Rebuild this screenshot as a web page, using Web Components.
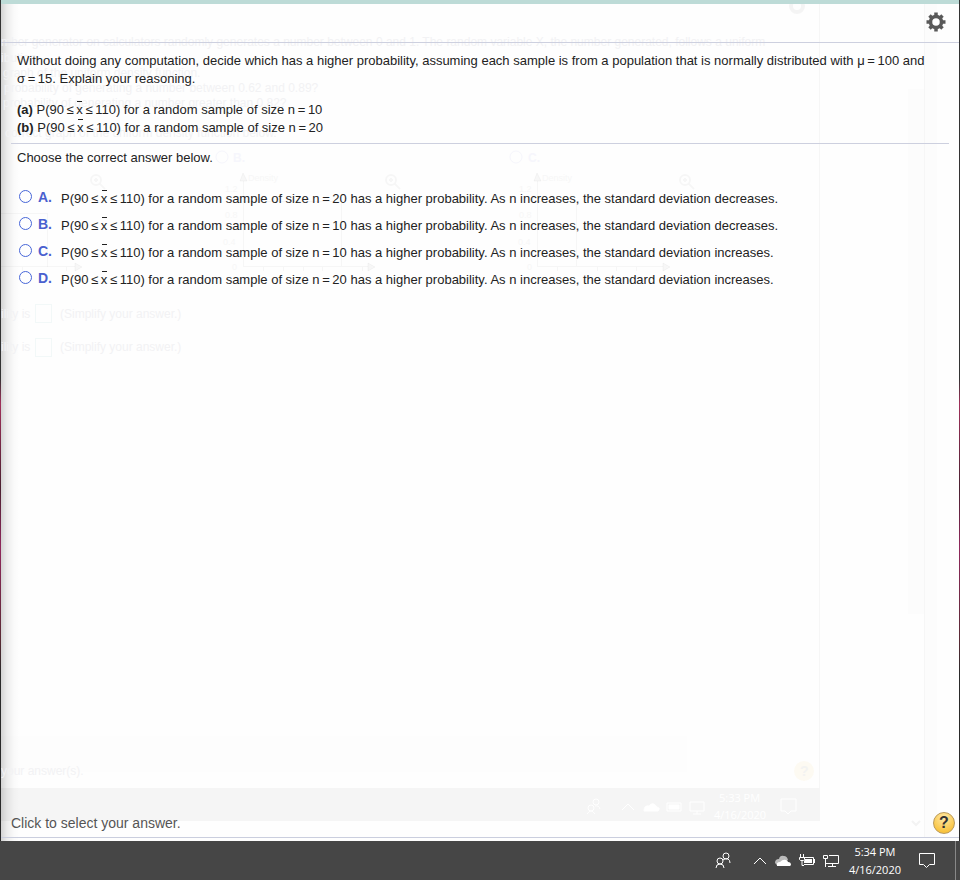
<!DOCTYPE html>
<html lang="en">
<head>
<meta charset="utf-8">
<title>Question</title>
<style>
  html, body { height: 100%; margin: 0; }
  body {
    font-family: "Liberation Sans", Arial, sans-serif;
    font-size: 13px;
    color: #222;
  }
</style>
</head>
<body>
<quiz-app></quiz-app>

<script>
const define = (name, template) =>
  customElements.define(
    name,
    class extends HTMLElement {
      constructor() {
        super();
        this.attachShadow({ mode: "open" });
        this.shadowRoot.innerHTML = template;
      }
    }
  );

// x with a bar over it
define("x-bar", `
  <span>x</span>
  <style>
  :host { display: inline-block; line-height: 12px; }
  span {
    display: block;
    padding-top: 3px;
    background: linear-gradient(#222, #222) top center / 5px 1px no-repeat;
  }
  </style>
`);

define("sample-range", `P(90&thinsp;≤&thinsp;<x-bar></x-bar>&thinsp;≤&thinsp;110)
  <style>
  :host { display: inline; white-space: nowrap; }
  </style>
`);

// The previous window, still fading out behind the question
define("fading-window", `
  <svg width="960" height="841" viewBox="1 0 960 841" aria-hidden="true">
    <rect x="908" y="89" width="17" height="525" fill="#fcfcfc"/>
    <rect x="925" y="4" width="12" height="833" fill="#fcfcfc"/>
    <path d="M819.5 4V788M924.5 4V837" stroke="#f6f6f6"/>
    <rect y="736" width="687" height="36" fill="#000" fill-opacity=".004"/>
    <rect y="788" width="820" height="33" fill="#000" fill-opacity=".035"/>
    <g fill="#f2f2f4" font-size="12">
      <text x="1" y="46">mber generator on calculators randomly generates a number between 0 and 1. The random variable X, the number generated, follows a uniform</text>
      <text x="1" y="62">ibution.</text>
      <text x="3" y="77">graph of the uniform density function.</text>
      <text x="4" y="92">probability of generating a number between 0.62 and 0.89?</text>
      <text x="3" y="107">probability of generating a number greater than 0.82?</text>
      <text x="5" y="137">correct graph of the uniform density function below.</text>
      <text x="1" y="318">ility is</text>
      <text x="60" y="318">(Simplify your answer.)</text>
      <text x="1" y="351">ility is</text>
      <text x="60" y="351">(Simplify your answer.)</text>
      <text x="1" y="775">your answer(s).</text>
    </g>
    <g fill="none" stroke="#f2f8f8">
      <rect x="35.5" y="304.5" width="16" height="18"/>
      <rect x="35.5" y="338.5" width="16" height="18"/>
    </g>
    <g fill="none" stroke="#f6f6fc">
      <circle cx="222" cy="157" r="6"/><circle cx="516" cy="157" r="6"/>
    </g>
    <g fill="#f6f6fc" font-size="12" font-weight="bold">
      <text x="233" y="162">B.</text><text x="528" y="162">C.</text>
    </g>
    <g fill="none" stroke="#000" stroke-opacity=".03">
      <path d="M0 213.5H47.5V267M0 266.5H80M243.5 176V266.5H372M243 201.5H341.5V266M537.5 176V266.5H668M537 201.5H576.5V266"/>
      <path d="M22.5 267v4M66.5 267v4M263.5 267v4M283.5 267v4M303.5 267v4M322.5 267v4M362.5 267v4M557.5 267v4M597.5 267v4M616.5 267v4M636.5 267v4"/>
      <path d="M75 263l7 4-7 4zM368 263l7 4-7 4zM663 263l7 4-7 4zM240 181l3-8 4 8zM534 181l3-8 4 8z" fill="#f7f7f7"/>
      <g stroke-width="2">
        <circle cx="96" cy="180" r="5"/><path d="M100 184l5 5M94 180h4M96 178v4"/>
        <circle cx="391" cy="180" r="5"/><path d="M395 184l5 5M389 180h4M391 178v4"/>
        <circle cx="685" cy="180" r="5"/><path d="M689 184l5 5M683 180h4M685 178v4"/>
      </g>
    </g>
    <g fill="#f7f7f7" font-size="9">
      <text x="248" y="181">Density</text><text x="542" y="181">Density</text>
      <text x="225" y="192">1.2</text><text x="225" y="218">0.8</text><text x="223" y="245">0.4</text><text x="232" y="270">0</text>
      <text x="519" y="192">1.2</text><text x="519" y="218">0.8</text><text x="518" y="245">0.4</text><text x="527" y="270">0</text>
    </g>
    <circle cx="797" cy="6" r="6" fill="none" stroke="#000" stroke-opacity=".04" stroke-width="4"/>
    <circle cx="804" cy="771" r="10" fill="#fdfaf2"/>
    <text x="800" y="776" font-size="14" font-weight="bold" fill="#f3f3f1">?</text>
    <g fill="none" stroke="#fff">
      <circle cx="596" cy="802" r="3"/><circle cx="591" cy="808" r="3"/><path d="M587 814q4-6 8 0M595 806q4-1 5 3"/>
      <path d="M622 810l6-6 6 6"/>
      <path d="M667 803h14v8h-14zM690 802h14v9h-14zM697 811v3M693 814h8M781 799h15v12h-5l-3 3-3-3h-4z"/>
      <path d="M644 811q0-6 5-5 4-5 8 1 4 1 1 4zM669 805h10v4h-10z" fill="#fff"/>
    </g>
    <g fill="#fff" font-family="Open Sans, sans-serif" font-size="11">
      <text x="719" y="802">5:33 PM</text><text x="714" y="819">4/16/2020</text>
    </g>
    <path d="M912 821l4 4 4-4" fill="none" stroke="#f3f3f3" stroke-width="2"/>
  </svg>
  <style>
  :host { position: absolute; inset: 0; z-index: -1; overflow: hidden; pointer-events: none; }
  svg { display: block; }
  </style>
`);

define("quiz-header", `
  <button aria-label="Settings">
    <svg width="20" height="20" viewBox="0 0 20 20">
      <path d="M10 .5V19.500M.5 10H19.500M3.500 3.500L16.500 16.500M16.500 3.500L3.500 16.500" stroke="#595959" stroke-width="3.500"/>
      <circle cx="10" cy="10" r="5.500" fill="#fff" stroke="#595959" stroke-width="3.500"/>
    </svg>
  </button>
  <style>
  :host {
    display: flex;
    justify-content: flex-end;
    align-items: center;
    height: 36px;
    padding: 0 13px 2px 0;
    border-top: 4px solid #bddbd7;
    border-bottom: 1px solid #cdd0df;
  }
  button { padding: 0; border: 0; background: none; height: 20px; }
  svg { display: block; }
  </style>
`);

define("quiz-question", `
  <slot></slot>
  <style>
  :host {
    display: block;
    margin: 0 10px;
    padding: 9px 6px 6px;
    line-height: 18px;
    border-bottom: 1px solid #cdd0df;
  }
  ::slotted(p) { margin: 0 0 13px; }
  </style>
`);

customElements.define(
  "quiz-choice",
  class QuizChoice extends HTMLElement {
    constructor() {
      super();
      const letter = this.getAttribute("letter");
      this.attachShadow({ mode: "open" });
      this.shadowRoot.innerHTML = `
        <input type="radio" id="choice" name="answer">
        <label for="choice"><b>${letter}.</b><span><slot></slot></span></label>
        <style>
        :host { display: flex; align-items: flex-start; height: 27px; line-height: 18px; }
        input {
          appearance: none;
          width: 13px;
          height: 13px;
          margin: 2px 6px 0 0;
          border: 1px solid #4766d8;
          border-radius: 50%;
        }
        input:checked { background: radial-gradient(#4766d8 40%, transparent 45%); }
        label { display: flex; }
        b { width: 23px; color: #4a60cf; font-size: 14px; }
        span { padding-top: 2px; }
        </style>
      `;
    }
    connectedCallback() {
      const input = this.shadowRoot.querySelector("input");
      input.addEventListener("change", () => {
        this.parentNode.querySelectorAll("quiz-choice").forEach((choice) => {
          if (choice !== this) choice.shadowRoot.querySelector("input").checked = false;
        });
      });
    }
  }
);

define("quiz-footer", `
  <span>Click to select your answer.</span>
  <button aria-label="Help">?</button>
  <style>
  :host {
    display: flex;
    justify-content: space-between;
    align-items: center;
    height: 28px;
    padding: 0 4px 0 10px;
    margin-bottom: 3px;
    border-bottom: 1px solid #cacede;
    color: #555;
    font-size: 14px;
  }
  button {
    width: 22px;
    height: 22px;
    padding: 0;
    border: 1px solid #b99a5c;
    border-radius: 50%;
    background: radial-gradient(circle at 50% 25%, #ffe9a8, #f9c440 75%);
    font: bold 16px "Liberation Sans", sans-serif;
    color: #333;
  }
  </style>
`);

define("task-bar", `
  <button aria-label="People">
    <svg width="16" height="18" viewBox="0 0 16 18"><circle cx="11" cy="4" r="3"/><circle cx="5" cy="9" r="3"/><path d="M1 16q0-4 4-4t4 4M8 8q2-2 5-1 2 1 2 4"/></svg>
  </button>
  <button class="more" aria-label="Show hidden icons">
    <svg width="14" height="10" viewBox="0 0 14 10"><path d="M1 8l6-6 6 6"/></svg>
  </button>
  <button aria-label="OneDrive">
    <svg width="16" height="12" viewBox="0 0 16 12"><path d="M0 8Q0 4 4 4q1-4 5-3 3 0 4 4L6 10H2z" fill="#bbb" stroke="none"/><path d="M2 11q-1-4 3-4 3-3 6-2 2 1 2 2 3 0 3 3l-1 1z" fill="#fff" stroke="none"/></svg>
  </button>
  <button aria-label="Battery">
    <svg width="16" height="13" viewBox="0 0 16 13"><path d="M5 3.500H14.500V10.500H5M15.500 5v4M1.500 0v3M4.500 0v3M.5 3.500h5v2l-1 1h-3l-1-1zM3 6v5.500h2"/><path d="M6 5h7v4H5V7z" fill="#fff" stroke="none"/></svg>
  </button>
  <button aria-label="Network">
    <svg width="16" height="14" viewBox="0 0 16 14"><path d="M6 1.500h9.500v8H3M9.500 10v3M5 12.500h8M.5 1.500h4v3h-4zM2.500 5v8"/></svg>
  </button>
  <div><span>5:34 PM</span><span>4/16/2020</span></div>
  <button class="notes" aria-label="Notifications">
    <svg width="16" height="17" viewBox="0 0 16 17"><path d="M.5 1.500h15v11h-5l-3 3-3-3h-4z"/></svg>
  </button>
  <style>
  :host {
    display: flex;
    justify-content: flex-end;
    align-items: center;
    gap: 8px;
    height: 39px;
    background: #464646;
    color: #fff;
    border-right: 1px solid #464646;
  }
  button { display: flex; padding: 0; border: 0; background: none; }
  svg { fill: none; stroke: #fff; }
  .more { margin-left: 14px; }
  div {
    display: flex;
    flex-direction: column;
    align-items: center;
    margin-left: 2px;
    font: 11px/18px "Open Sans", sans-serif;
  }
  .notes {
    align-self: stretch;
    align-items: center;
    margin-left: 10px;
    padding-right: 20px;
    border-right: 1px solid #888;
    margin-right: 3px;
  }
  </style>
`);

define("quiz-app", `
  <main>
    <fading-window></fading-window>
    <quiz-header></quiz-header>
    <quiz-question>
      <p>Without doing any computation, decide which has a higher probability, assuming each sample is from a population that is normally distributed with μ&thinsp;=&thinsp;100 and <span>σ&thinsp;=&thinsp;15</span>. Explain your reasoning.</p>
      <div><b>(a)</b> <sample-range></sample-range> for a random sample of size n&thinsp;=&thinsp;10</div>
      <div><b>(b)</b> <sample-range></sample-range> for a random sample of size n&thinsp;=&thinsp;20</div>
    </quiz-question>
    <section>
      <p>Choose the correct answer below.</p>
      <quiz-choice letter="A"><sample-range></sample-range> for a random sample of size n&thinsp;=&thinsp;20 has a higher probability. As n increases, the standard deviation decreases.</quiz-choice>
      <quiz-choice letter="B"><sample-range></sample-range> for a random sample of size n&thinsp;=&thinsp;10 has a higher probability. As n increases, the standard deviation decreases.</quiz-choice>
      <quiz-choice letter="C"><sample-range></sample-range> for a random sample of size n&thinsp;=&thinsp;10 has a higher probability. As n increases, the standard deviation increases.</quiz-choice>
      <quiz-choice letter="D"><sample-range></sample-range> for a random sample of size n&thinsp;=&thinsp;20 has a higher probability. As n increases, the standard deviation increases.</quiz-choice>
    </section>
    <quiz-footer></quiz-footer>
  </main>
  <task-bar></task-bar>
  <style>
  :host { display: flex; flex-direction: column; min-height: 100vh; }
  main {
    position: relative;
    z-index: 0;
    flex: 1;
    display: flex;
    flex-direction: column;
    border: solid #2c2c30;
    border-width: 0 1px;
    border-image: linear-gradient(#333 45%, #a0305a 48%, #4a2030 58%, #90285c 65%, #5a2a34 76%, #2a2a2a 80%) 1;
    background: linear-gradient(to right, #d4d4d4, #ececec 6px, #fafafa 13px, #fefefe 18px);
  }
  section { flex: 1; padding: 5px 16px; }
  section p { margin: 0 0 21px; line-height: 18px; }
  quiz-question span { white-space: nowrap; }
  quiz-choice { margin-left: 2px; }
  </style>
`);
</script>
</body>
</html>
